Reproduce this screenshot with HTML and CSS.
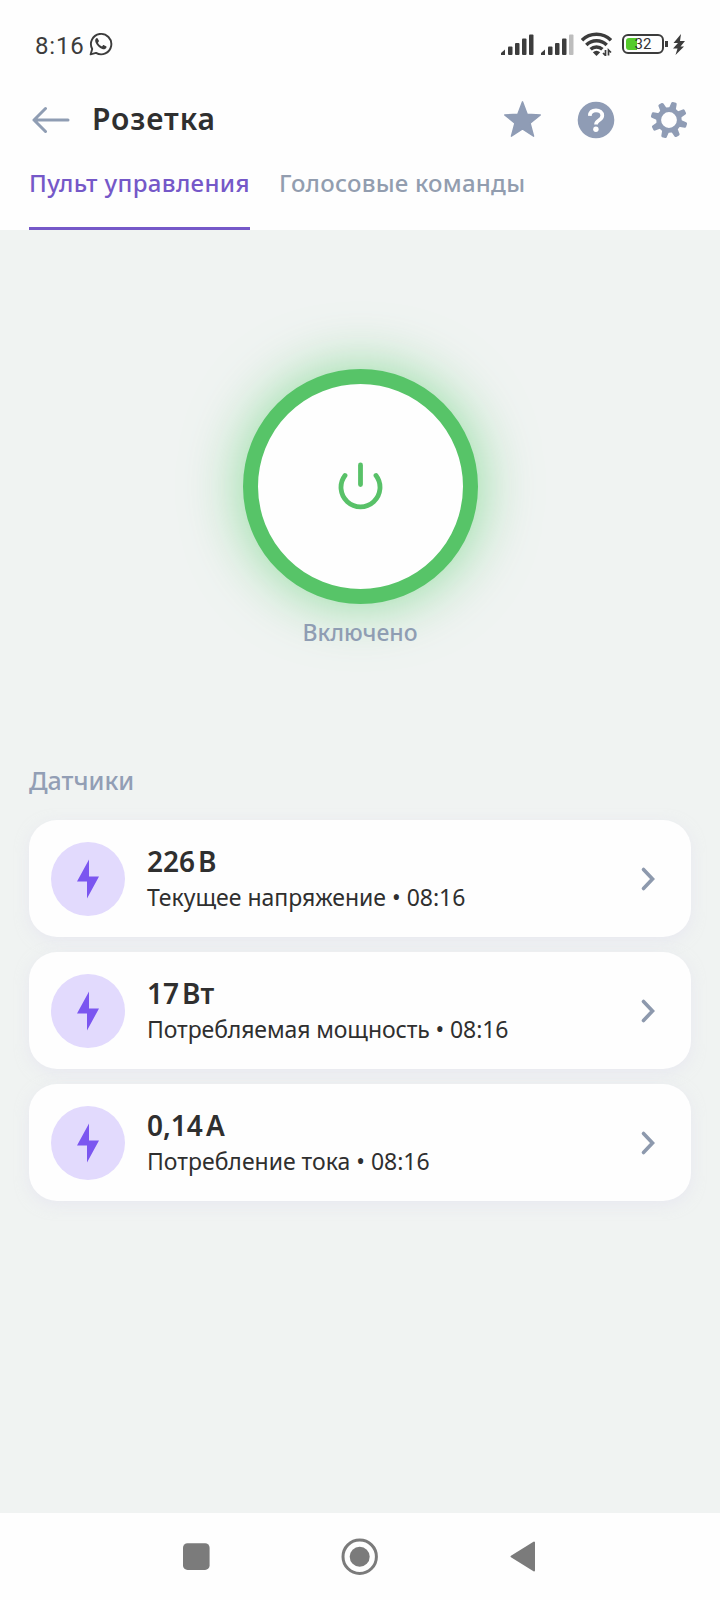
FILE: index.html
```html
<!DOCTYPE html>
<html lang="ru">
<head>
    <meta charset="UTF-8">
    <meta name="viewport" content="width=device-width, initial-scale=1.0">
    <title>Розетка</title>
    <link rel="stylesheet" href="styles.css">
</head>
<body>
    <div class="screen">
        <header class="header">
            <!-- Status bar -->
            <div class="status-bar">
                <span class="clock">8:16</span>
                <svg class="whatsapp" width="24" height="24" viewBox="0 0 24 24">
                    <path d="M1.6 22.4l1.6-5.4A10.2 10.2 0 1 1 7 20.9z" fill="none" stroke="#3c3c3c" stroke-width="1.9" stroke-linejoin="round"/>
                    <path d="M8.6 6.4c-.5-.5-1.2-.3-1.6.2-1 1-1 2.5-.3 4.1 1.3 2.9 3.6 5.1 6.6 6.3 1.7.6 3.3.2 4-1.2.4-.8.3-1.3-.3-1.6l-2-1c-.5-.3-.9-.1-1.2.3l-.8 1c-1.9-.8-3.2-2-4.1-3.8l.8-1c.3-.4.2-.7.1-1.1z" fill="#3c3c3c"/>
                </svg>
                <div class="status-icons">
                    <svg width="33" height="21" viewBox="0 0 33 21" fill="#3c3c3c">
                        <path d="M0 21v-2l4-3.5v5.5z"/>
                        <rect x="7" y="12.5" width="4.5" height="8.5" rx="1"/>
                        <rect x="14" y="9" width="4.5" height="12" rx="1"/>
                        <rect x="21" y="4.5" width="4.5" height="16.5" rx="1"/>
                        <rect x="28" y="0.5" width="4.5" height="20.5" rx="1"/>
                    </svg>
                    <svg width="33" height="21" viewBox="0 0 33 21" fill="#3c3c3c">
                        <path d="M0 21v-2l4-3.5v5.5z"/>
                        <rect x="7" y="12.5" width="4.5" height="8.5" rx="1"/>
                        <rect x="14" y="9" width="4.5" height="12" rx="1"/>
                        <rect x="21" y="4.5" width="4.5" height="16.5" rx="1"/>
                        <rect x="28" y="0.5" width="4.5" height="20.5" rx="1" fill="#bdbdbd"/>
                    </svg>
                    <svg class="wifi" width="32" height="24" viewBox="0 0 32 24">
                        <g fill="none" stroke="#3c3c3c" stroke-width="3.5">
                            <path d="M1 8.2a20.5 20.5 0 0 1 29 0"/>
                            <path d="M5.3 12.9a14.5 14.5 0 0 1 20.4 0"/>
                            <path d="M9.6 17.3a8.6 8.6 0 0 1 11.8 0"/>
                        </g>
                        <path d="M11.8 20.3q3.7-3 7.4 0l-3.7 3.7z" fill="#3c3c3c"/>
                        <path d="M24.5 18v5.5l-2.5-2.5M27.5 23.5v-5.5l2.5 2.5" fill="none" stroke="#3c3c3c" stroke-width="1.7"/>
                    </svg>
                    <div class="battery"><span class="battery-level"></span><span class="battery-text">32</span></div>
                    <svg class="charge" width="12" height="21" viewBox="0 0 12 21">
                        <path d="M8 0L.5 9H5L0 14.5h4.5L2.5 21 11 12.5H7.5L12 7H7z" fill="#3c3c3c"/>
                    </svg>
                </div>
            </div>

            <!-- Title and actions -->
            <div class="title-bar">
                <svg class="back" width="38" height="28" viewBox="0 0 38 28">
                    <path d="M13.5 2.5L2 14l11.5 11.5M2 14h34" fill="none" stroke="#8f9db3" stroke-width="3" stroke-linecap="round" stroke-linejoin="round"/>
                </svg>
                <h1>Розетка</h1>
                <div class="actions">
                    <svg width="38" height="38" viewBox="0 0 38 38">
                        <path d="M18.5 .8l4.7 12.4 13.1.7-10.2 8.3 3.5 13L18.5 27.9 7.4 35.2l3.5-13L.7 13.9l13.1-.7z" fill="#8f9cb5" stroke="#8f9cb5" stroke-width="1.4" stroke-linejoin="round"/>
                    </svg>
                    <svg width="38" height="38" viewBox="0 0 38 38">
                        <circle cx="19" cy="19" r="18.3" fill="#8f9cb5"/>
                        <path d="M12.8 14.8c.2-3.6 2.7-5.5 6.2-5.5s6.3 2 6.3 5.2c0 2.6-1.5 3.7-3.6 5-1.9 1.2-2.7 1.9-2.7 4" fill="none" stroke="#fff" stroke-width="3.7"/>
                        <circle cx="18.9" cy="28.3" r="2.7" fill="#fff"/>
                    </svg>
                    <svg width="38" height="38" viewBox="-19 -19 38 38">
                        <circle r="10.3" fill="none" stroke="#8f9cb5" stroke-width="4.8"/>
                        <g fill="#8f9cb5">
                            <path id="tooth" d="M-3.5-11.5l.7-5.6q.2-1.3 1.3-1.3h3q1.1 0 1.3 1.3l.7 5.6z" transform="rotate(17)"/>
                            <use href="#tooth" transform="rotate(45)"/>
                            <use href="#tooth" transform="rotate(90)"/>
                            <use href="#tooth" transform="rotate(135)"/>
                            <use href="#tooth" transform="rotate(180)"/>
                            <use href="#tooth" transform="rotate(225)"/>
                            <use href="#tooth" transform="rotate(270)"/>
                            <use href="#tooth" transform="rotate(315)"/>
                        </g>
                    </svg>
                </div>
            </div>

            <nav class="tabs">
                <a class="tab active">Пульт управления</a>
                <a class="tab">Голосовые команды</a>
            </nav>
        </header>

        <main class="content">
            <div class="power">
                <button class="power-btn">
                    <svg width="46" height="50" viewBox="0 0 46 50">
                        <path d="M23.5 3v19.5M8 13.5a19.5 19.5 0 1 0 31 0" fill="none" stroke="#58c168" stroke-width="4.8" stroke-linecap="round"/>
                    </svg>
                </button>
                <div class="power-state">Включено</div>
            </div>

            <h2>Датчики</h2>
            <div class="sensors">
                <div class="sensor">
                    <div class="sensor-icon">
                        <svg width="22" height="40" viewBox="0 0 22 40"><path d="M12 .5L0 22.5h10V39.5L22 17.5H12z" fill="#7b56f0"/></svg>
                    </div>
                    <div class="sensor-info">
                        <div class="value">226<span class="unit">В</span></div>
                        <div class="label">Текущее напряжение • 08:16</div>
                    </div>
                    <svg class="chevron" width="16" height="26" viewBox="0 0 16 26"><path d="M3.5 3.5l9 9.5-9 9.5" fill="none" stroke="#8d99ad" stroke-width="3.6" stroke-linecap="round"/></svg>
                </div>
                <div class="sensor">
                    <div class="sensor-icon">
                        <svg width="22" height="40" viewBox="0 0 22 40"><path d="M12 .5L0 22.5h10V39.5L22 17.5H12z" fill="#7b56f0"/></svg>
                    </div>
                    <div class="sensor-info">
                        <div class="value">17<span class="unit">Вт</span></div>
                        <div class="label label-power">Потребляемая мощность • 08:16</div>
                    </div>
                    <svg class="chevron" width="16" height="26" viewBox="0 0 16 26"><path d="M3.5 3.5l9 9.5-9 9.5" fill="none" stroke="#8d99ad" stroke-width="3.6" stroke-linecap="round"/></svg>
                </div>
                <div class="sensor">
                    <div class="sensor-icon">
                        <svg width="22" height="40" viewBox="0 0 22 40"><path d="M12 .5L0 22.5h10V39.5L22 17.5H12z" fill="#7b56f0"/></svg>
                    </div>
                    <div class="sensor-info">
                        <div class="value">0,14<span class="unit">А</span></div>
                        <div class="label">Потребление тока • 08:16</div>
                    </div>
                    <svg class="chevron" width="16" height="26" viewBox="0 0 16 26"><path d="M3.5 3.5l9 9.5-9 9.5" fill="none" stroke="#8d99ad" stroke-width="3.6" stroke-linecap="round"/></svg>
                </div>
            </div>
        </main>

        <!-- System navigation -->
        <footer class="nav-bar">
            <svg width="38" height="38" viewBox="0 0 38 38"><rect x="6" y="5.3" width="26.6" height="26.6" rx="4.5" fill="#7b7b7b"/></svg>
            <svg width="38" height="38" viewBox="0 0 38 38">
                <circle cx="18.7" cy="18.7" r="16.7" fill="none" stroke="#7b7b7b" stroke-width="3"/>
                <circle cx="18.7" cy="18.7" r="10" fill="#7b7b7b"/>
            </svg>
            <svg width="38" height="38" viewBox="0 0 38 38"><path d="M6.5 18.5L29 4.5v28z" fill="#7b7b7b" stroke="#7b7b7b" stroke-width="2" stroke-linejoin="round"/></svg>
        </footer>
    </div>
</body>
</html>
```
FILE: styles.css
```css
body {
    font-family: "Noto Sans", sans-serif;
    margin: 0;
    padding: 0;
    background-color: #f0f3f2;
    color: #2f2f2f;
}
svg {
    display: block;
    flex: none;
}
.screen {
    width: 720px;
    height: 1600px;
    display: flex;
    flex-direction: column;
    overflow: hidden;
}
.header {
    height: 230px;
    background-color: #fefefe;
}
/* Status bar */
.status-bar {
    display: flex;
    align-items: center;
    height: 88px;
    padding: 0 35px;
    box-sizing: border-box;
}
.clock {
    font-family: Roboto, sans-serif;
    font-size: 24px;
    line-height: 30px;
    width: 54px;
    padding-top: 3px;
    color: #3c3c3c;
    letter-spacing: 0.8px;
}
.status-icons {
    display: flex;
    align-items: center;
    margin-left: auto;
    gap: 7px;
}
.battery {
    position: relative;
    width: 42px;
    height: 20px;
    box-sizing: border-box;
    border: 2px solid #3c3c3c;
    border-radius: 6px;
    margin: 0 2px;
    padding: 2px;
}
.battery::after {
    content: "";
    position: absolute;
    left: 41px;
    top: 5px;
    width: 3px;
    height: 6px;
    background-color: #3c3c3c;
}
.battery-level {
    display: block;
    width: 11px;
    height: 12px;
    border-radius: 3px 0 0 3px;
    background-color: #55cb2b;
}
.battery-text {
    position: absolute;
    left: 0;
    top: 0;
    width: 38px;
    text-align: center;
    font-family: Roboto, sans-serif;
    font-size: 15px;
    line-height: 17px;
    color: #333;
}
/* Title */
.title-bar {
    display: flex;
    align-items: center;
    height: 64px;
    padding: 0 32px;
}
h1 {
    margin: -2px 0 0 22px;
    font-size: 30px;
    line-height: 40px;
    font-weight: 600;
    letter-spacing: 0.9px;
}
.actions {
    display: flex;
    gap: 35px;
    margin-left: auto;
}
/* Tabs */
.tabs {
    display: flex;
    gap: 29px;
    height: 78px;
    padding: 0 29px;
}
.tab {
    box-sizing: border-box;
    height: 78px;
    padding-top: 14px;
    font-size: 24px;
    line-height: 34px;
    font-weight: 500;
    letter-spacing: 0.25px;
    color: #929daf;
    white-space: nowrap;
}
.tab.active {
    width: 221px;
    letter-spacing: 0.36px;
    color: #7558c8;
    border-bottom: 3px solid #7558c8;
}
.content {
    flex: 1;
    padding: 139px 29px 0;
}
/* Power button */
.power {
    display: flex;
    flex-direction: column;
    align-items: center;
}
.power-btn {
    display: flex;
    align-items: center;
    justify-content: center;
    width: 235px;
    height: 235px;
    padding: 0;
    border: 15px solid #57c468;
    border-radius: 50%;
    background-color: #fefefe;
    box-shadow: 0 0 58px rgba(87, 207, 108, 0.66);
}
.power-state {
    margin-top: 11px;
    font-size: 23px;
    line-height: 34px;
    font-weight: 500;
    color: #8f9db3;
}
/* Sensors */
h2 {
    margin: 114px 0 23px;
    font-size: 25px;
    line-height: 34px;
    font-weight: 500;
    color: #929eb5;
}
.sensors {
    display: flex;
    flex-direction: column;
    gap: 15px;
}
.sensor {
    display: flex;
    align-items: center;
    height: 117px;
    padding: 0 35px 0 22px;
    border-radius: 28px;
    background-color: #fefefe;
    box-shadow: 0 4px 14px rgba(226, 224, 240, 0.5);
}
.sensor-icon {
    display: flex;
    align-items: center;
    justify-content: center;
    width: 74px;
    height: 74px;
    border-radius: 50%;
    background-color: #e2dafd;
}
.sensor-info {
    flex: 1;
    margin-left: 22px;
    padding-top: 2px;
}
.value {
    font-size: 28px;
    line-height: 36px;
    font-weight: 600;
}
.unit {
    margin-left: 3px;
}
.label {
    font-size: 23px;
    line-height: 37px;
    white-space: nowrap;
}
.label-power {
    letter-spacing: -0.1px;
}
/* Bottom bar */
.nav-bar {
    display: flex;
    justify-content: center;
    gap: 126px;
    height: 62px;
    padding-top: 25px;
    background-color: #fefefe;
}
```
